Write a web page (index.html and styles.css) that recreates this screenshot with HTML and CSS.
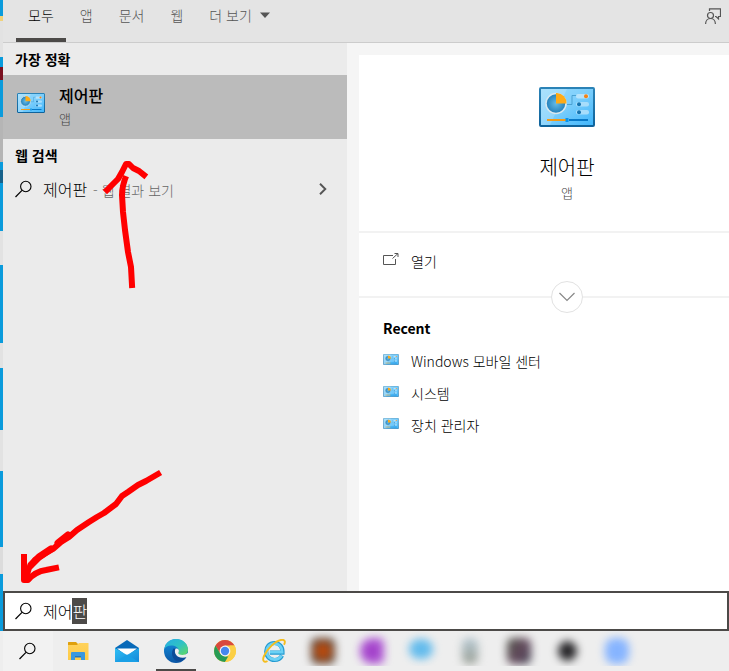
FILE: index.html
```html
<!DOCTYPE html>
<html lang="ko">
<head>
<meta charset="utf-8">
<title>제어판</title>
<link rel="stylesheet" href="styles.css">
</head>
<body>
<svg class="defs" aria-hidden="true">
  <defs>
    <linearGradient id="panel" x1="0" y1="0" x2="1" y2="1"><stop offset="0" stop-color="#9bdcfd"/><stop offset=".45" stop-color="#80d0fc"/><stop offset="1" stop-color="#3eb5fb"/></linearGradient>
    <linearGradient id="frame" x1="0" y1="0" x2="0" y2="1"><stop offset="0" stop-color="#2b83b7"/><stop offset="1" stop-color="#0f639b"/></linearGradient>
    <radialGradient id="pie"><stop offset="0" stop-color="#65bbe8"/><stop offset="1" stop-color="#217fba"/></radialGradient>
    <linearGradient id="edgeTop" x1="0" y1="0" x2="1" y2="1"><stop offset="0" stop-color="#26aee5"/><stop offset=".5" stop-color="#2fc2c4"/><stop offset="1" stop-color="#65db59"/></linearGradient>
    <linearGradient id="edgeBase" x1="0" y1="0" x2="0" y2="1"><stop offset="0" stop-color="#1491df"/><stop offset="1" stop-color="#0b56a5"/></linearGradient>
    <linearGradient id="mailFront" x1="0" y1="0" x2="1" y2="1"><stop offset="0" stop-color="#2ec0f5"/><stop offset="1" stop-color="#1687d8"/></linearGradient>
    <linearGradient id="folder" x1="0" y1="0" x2="0" y2="1"><stop offset="0" stop-color="#ffd25c"/><stop offset="1" stop-color="#fecb46"/></linearGradient>
  </defs>
  <symbol id="control-panel" viewBox="0 0 56 40">
    <rect x="1" y="1" width="54" height="38" rx="1" fill="url(#panel)" stroke="url(#frame)" stroke-width="2"/>
    <path d="M2 2h26L11 38H2z" fill="#fff" opacity=".18"/>
    <circle cx="17" cy="16.500" r="10" fill="url(#pie)" stroke="#d8e8f0" stroke-width="1.500"/>
    <path d="M17 6h1a10 10 0 0 1 9.500 10.500H17z" fill="#ffab16"/>
    <path d="M28 17.500h5v-9h5" fill="none" stroke="#4aa1d2"/>
    <rect x="37" y="7" width="13" height="4.500" rx="2" fill="#b7e3fb"/><circle cx="47" cy="9.200" r="2" fill="#f58316"/>
    <rect x="37" y="15" width="13" height="4.500" rx="2" fill="#a7ddfb"/><circle cx="40" cy="17.200" r="2" fill="#1674b1"/>
    <rect x="37" y="23" width="13" height="4.500" rx="2" fill="#a7ddfb"/><circle cx="40" cy="25.200" r="2" fill="#1674b1"/>
    <path d="M8 33h19" stroke="#f39b16" stroke-width="2"/><path d="M30 33h19" stroke="#0879c8" stroke-width="2"/>
    <path d="M26.500 31h3v4h-3z" fill="#0795ed"/>
  </symbol>
  <symbol id="search" viewBox="0 0 18 18">
    <circle cx="10.800" cy="6.500" r="5.200" fill="none" stroke="currentColor" stroke-width="1.100"/>
    <path d="M7 10.400.5 17" stroke="currentColor" stroke-width="1.200"/>
  </symbol>
</svg>

<div class="screen">
  <div class="upper">
    <div class="desktop-edge"></div>
    <div class="search-window">
      <header class="tabs-bar">
        <nav class="tabs">
          <button class="tab active">모두</button>
          <button class="tab">앱</button>
          <button class="tab">문서</button>
          <button class="tab">웹</button>
          <button class="tab more">더 보기 <svg class="caret" viewBox="0 0 10 6"><path d="M0 .5h10L5 6z" fill="currentColor"/></svg></button>
        </nav>
        <button class="feedback" aria-label="피드백">
          <svg width="16" height="17" viewBox="0 0 16 17" fill="none" stroke="#555" stroke-width="1.200"><path d="M4.500 3V.8h11v7.700h-2v2.400L11 8.500h-1"/><circle cx="5.500" cy="7.500" r="3"/><path d="M.6 16c0-3 1.800-5.500 4.900-5.500s4.900 2.500 4.900 5.500"/></svg>
        </button>
      </header>
      <div class="content">
        <section class="results">
          <h2 class="group">가장 정확</h2>
          <button class="best">
            <svg class="best-icon"><use href="#control-panel"/></svg>
            <span class="best-text"><strong>제어판</strong><small>앱</small></span>
          </button>
          <h2 class="group">웹 검색</h2>
          <button class="web-result">
            <svg class="search-icon"><use href="#search"/></svg>
            <span class="web-text">제어판<small> - 웹 결과 보기</small></span>
            <svg class="chevron" viewBox="0 0 8 12"><path d="m1 .8 5.300 5.200L1 11.200" fill="none" stroke="#555" stroke-width="1.900"/></svg>
          </button>
        </section>
        <section class="preview">
          <div class="card">
            <div class="hero">
              <svg class="hero-icon"><use href="#control-panel"/></svg>
              <h1>제어판</h1>
              <p>앱</p>
            </div>
            <div class="actions">
              <button class="row">
                <svg class="open-icon" viewBox="0 0 16 12" fill="none" stroke="#555"><path d="M10 2.500H.5v9h12V6"/><path d="M9.500 5.500 15 .5M11.500.5H15V4"/></svg>
                <span>열기</span>
              </button>
              <button class="expand" aria-label="확장"><svg width="16" height="10" viewBox="0 0 16 10"><path d="m.5 1 7.500 7.500L15.500 1" fill="none" stroke="#888" stroke-width="1.200"/></svg></button>
            </div>
            <div class="recent">
              <h3>Recent</h3>
              <button class="row"><svg class="mini"><use href="#control-panel"/></svg><span>Windows 모바일 센터</span></button>
              <button class="row"><svg class="mini"><use href="#control-panel"/></svg><span>시스템</span></button>
              <button class="row"><svg class="mini"><use href="#control-panel"/></svg><span>장치 관리자</span></button>
            </div>
          </div>
        </section>
      </div>
      <label class="search-box">
        <svg class="search-icon"><use href="#search"/></svg>
        <input id="query" type="text" value="제어판" aria-label="검색" autocomplete="off" spellcheck="false">
      </label>
    </div>
  </div>
  <footer class="taskbar">
    <button class="task task-search" aria-label="검색"><svg class="search-icon"><use href="#search"/></svg></button>
    <button class="task" aria-label="파일 탐색기">
      <svg width="22" height="20" viewBox="0 0 22 20"><path d="M1 1.500Q1 1 1.500 1H9l2 2h9v8H1z" fill="#dfa00d"/><path d="M1 4h9l2-2h9.500v17H1z" fill="url(#folder)"/><path d="M4 19v-7q0-1 1-1h12q1 0 1 1v7h-4v-4H8v4z" fill="#3998de"/><path d="M8 15h6v1.500H8z" fill="#2474b8"/></svg>
    </button>
    <button class="task" aria-label="메일">
      <svg width="24" height="24" viewBox="0 0 24 24"><path d="M0 9 12 1l12 8v5H0z" fill="#0869b8"/><path d="M2 9.500h20L12 17z" fill="#fff"/><path d="M0 9v14h24V9l-12 7z" fill="url(#mailFront)"/><path d="m0 23 12-7.500L24 23z" fill="#1aa0e6"/></svg>
    </button>
    <button class="task running" aria-label="Edge">
      <svg width="24" height="24" viewBox="0 0 24 24"><circle cx="12" cy="12" r="12" fill="url(#edgeBase)"/><path d="M.2 10.500C1.200 4 6 0 12 0c7 0 12 5 12 10.500 0 4-3 6-6.500 6-2.500 0-4-.8-4-1.700s1.200-1 1.200-3.200C14.700 8.500 11 6.500 7.300 6.500 4 6.500 1.200 8 .2 10.500z" fill="url(#edgeTop)"/><path d="M9.500 9.500c-3 4-1.500 11.500 4.500 13 3.500.4 7-2 8.500-5-2 .8-4.500 1-6.500.7-3-.5-5-2.700-5-5.200 0-1.500.5-2.500 1.200-3.200z" fill="#0c4b98"/><path d="M11.500 9.800c2.200-.9 4 1 3.300 3-.9 1.500-.6 2.200.8 2.700 2.900.9 5.900.3 8.400-1.500v3l-1 1c-3 1-6.500.9-8.800-.3-3.100-1.700-4-5.400-2.700-7.900z" fill="#eee"/></svg>
    </button>
    <button class="task" aria-label="Chrome">
      <svg width="22" height="22" viewBox="0 0 22 22"><circle cx="11" cy="11" r="11" fill="#fbcf45"/><path d="M1.500 5.500A11 11 0 0 1 20.500 5.500H11L6.300 13.800z" fill="#d8493e"/><path d="M1.500 5.500 6.300 13.700 11 16.500h4.700L11 22A11 11 0 0 1 1.500 5.500z" fill="#279b55"/><path d="M20.500 5.500A11 11 0 0 1 11 22l4.800-8.300V5.500z" fill="#fbcf45"/><circle cx="11" cy="11" r="5.400" fill="#f5f5f5"/><circle cx="11" cy="11" r="4.200" fill="#4587ed"/></svg>
    </button>
    <button class="task" aria-label="Internet Explorer">
      <svg width="24" height="24" viewBox="0 0 24 24" fill="none"><path d="M20 16.500c-1.500 3-4.300 4.500-7.500 4.500-5 0-8.300-3.700-8.300-8.500S7.500 4 12.500 4s8.300 3.800 8 9.700H7.800" stroke="#249bd1" stroke-width="4.200"/><path d="M19.500 16.500c-1.500 2.700-4 4-7 4-4.500 0-7.800-3.300-7.800-8s3.300-8 7.800-8 7.800 3.500 7.600 8.700H8" stroke="#6bd1f5" stroke-width="2.800"/><path d="M9 11q.8-3 3.800-3t3.700 3z" fill="#eee"/><path d="M5.500 22C2 24 0 21.500 2 17 5 10 14 1 20 .8c3-.1 3.600 2 2 5" stroke="#f4bd1d" stroke-width="1.900"/></svg>
    </button>
    <button class="task blurred" aria-label="앱 1"><i class="blob brown"></i></button>
    <button class="task blurred" aria-label="앱 2"><i class="blob purple"></i></button>
    <button class="task blurred" aria-label="앱 3"><i class="blob sky"></i></button>
    <button class="task blurred" aria-label="앱 4"><i class="blob stone"></i></button>
    <button class="task blurred" aria-label="앱 5"><i class="blob slate"></i></button>
    <button class="task blurred" aria-label="앱 6"><i class="blob black"></i></button>
    <button class="task blurred" aria-label="앱 7"><i class="blob blue"></i></button>
  </footer>
  <svg class="marks" width="180" height="600" viewBox="0 0 180 600" aria-hidden="true">
    <path d="M125 179c-2 5-3 10-3 16l1 17 2 18 3 22 3 15 1 18"/>
    <path d="m107 190 6-6 5-5 4-7 4-8h3l4 4 6 3 5 4"/>
    <path d="m158 474-12 7-8 4-10 7-6 4-6 8-12 9-7 4-8 5-12 8-8 7-8 5-8 7-9 5-9 6-6 8-3 10"/>
    <path d="m68 535-10 8M51 549l-12 8-8 8" class="heavy"/>
    <path d="M24 557v23h4c6-7 11-9 18-10l10-2"/>
  </svg>
</div>
<script src="script.js"></script>
</body>
</html>
```
FILE: styles.css
```css
* { box-sizing: border-box; }
body {
  margin: 0;
  overflow: hidden;
  font-family: "Noto Sans CJK KR", "Noto Sans", sans-serif;
  font-size: 14px;
  font-weight: 300;
  line-height: 20px;
  color: #000;
}
button {
  border: 0;
  padding: 0;
  background: none;
  font: inherit;
  color: inherit;
  text-align: left;
}
h1, h2, h3, p { margin: 0; }
svg { display: block; flex: none; }
.defs { position: absolute; width: 0; height: 0; }
.screen { position: relative; display: flex; flex-direction: column; min-height: 100vh; }
.upper { flex: 1; display: flex; }
.desktop-edge {
  flex: none;
  width: 3px;
  background: linear-gradient(#0a9bdc 16px, #f0d27a 16px 21px, #e2e2e2 21px 57px, #0a9bdc 57px 67px, #7a1020 67px 80px, #0a9bdc 80px 117px, #b5b5b5 117px 162px, #0a9bdc 162px 170px, #17618a 170px 183px, #0a9bdc 183px 231px, #e2e2e2 231px 265px, #0a9bdc 265px 343px, #e2e2e2 343px 368px, #0a9bdc 368px 430px, #e2e2e2 430px 471px, #0a9bdc 471px 547px, #dcdcdc 547px 574px, #0a9bdc 574px);
}
.search-window { flex: 1; min-width: 0; display: flex; flex-direction: column; }
.tabs-bar {
  display: flex;
  justify-content: space-between;
  align-items: flex-start;
  height: 43px;
  padding: 0 8px 0 13px;
  background: #e4e4e4;
  border-bottom: 1px solid #ccc;
}
.tabs { display: flex; gap: 2px; height: 42px; }
.tab { padding: 0 12px 8px; color: #555; border-bottom: 4px solid transparent; }
.tab.active { color: #000; border-color: #4c4a48; }
.more { display: flex; align-items: center; gap: 8px; }
.caret { width: 10px; height: 6px; color: #555; }
.feedback { padding-top: 8px; }
.content { flex: 1; display: flex; min-height: 0; }
.results { flex: none; width: 344px; background: #ebebeb; }
.group { padding: 6px 12px; font-size: 14px; font-weight: 700; line-height: 20px; }
.best {
  display: flex;
  align-items: center;
  gap: 14px;
  width: 100%;
  height: 64px;
  padding: 0 14px;
  background: #bbb;
}
.best-icon { width: 28px; height: 20px; margin-bottom: 8px; }
.best-text { display: flex; flex-direction: column; gap: 4px; }
.best-text strong { font-size: 16px; font-weight: 500; }
small { font-size: 13px; color: #444; }
.web-result { display: flex; align-items: center; width: 100%; height: 36px; padding: 0 20px 0 12px; }
.search-icon { width: 18px; height: 18px; }
.web-text { flex: 1; padding-left: 10px; font-size: 16px; }
.web-text small { padding-left: 2px; color: #666; font-size: 14px; }
.chevron { width: 8px; height: 12px; }
.preview { flex: 1; min-width: 0; display: flex; overflow: hidden; padding: 12px 0 0 12px; background: #f5f5f5; }
.card { flex: 1 0 416px; background: #fff; }
.hero { display: flex; flex-direction: column; align-items: center; height: 178px; padding-top: 32px; border-bottom: 2px solid #f2f2f2; }
.hero-icon { width: 56px; height: 40px; }
.hero h1 { margin-top: 26px; font-size: 20px; line-height: 28px; font-weight: 300; }
.hero p { margin-top: 2px; font-size: 13px; color: #444; }
.actions { position: relative; height: 65px; padding: 12px 24px; border-bottom: 2px solid #f2f2f2; }
.row { display: flex; align-items: center; gap: 12px; width: 100%; height: 32px; }
.open-icon { width: 16px; height: 12px; margin-bottom: 4px; }
.expand {
  position: absolute;
  left: 50%;
  bottom: -17px;
  display: grid;
  place-items: center;
  width: 32px;
  height: 32px;
  margin-left: -16px;
  border: 1px solid #e2e2e2;
  border-radius: 50%;
  background: #fff;
}
.recent { padding: 20px 24px; }
.recent h3 { font-size: 14px; line-height: 20px; margin-bottom: 7px; }
.mini { width: 16px; height: 11px; margin-bottom: 4px; }
.search-box { display: flex; align-items: center; height: 40px; padding: 0 10px; border: 2px solid #4c4a48; background: #fff; }
#query { flex: 1; min-width: 0; height: 26px; margin: 0 0 0 10px; padding: 0; border: 0; outline: 0; background: none; font: 300 16px/26px "Noto Sans CJK KR", sans-serif; color: #000; }
#query::selection { background: #4c4a48; color: #fff; }
.taskbar { display: flex; height: 40px; padding-left: 3px; background: #eee; }
.task { display: flex; justify-content: center; align-items: center; width: 49px; height: 40px; }
.task-search { width: 50px; background: #f2f2f2; }
.running { background: linear-gradient(#4c4a48, #4c4a48) center bottom / 40px 2px no-repeat; }
.blurred { height: 35px; padding-top: 5px; overflow: hidden; }
.blob { width: 24px; height: 26px; border-radius: 6px; filter: blur(4px); }
.brown { background: radial-gradient(#cc4d08 20%, #4a4038 75%); }
.purple { background: radial-gradient(#9c35c4, #b96bdc); border-radius: 12px 5px 5px 12px; }
.sky { height: 20px; margin-bottom: 4px; background: #63bbec; border-radius: 10px; }
.stone { width: 16px; background: linear-gradient(#b5c8d3, #9a9f94); }
.slate { background: linear-gradient(120deg, #4c5545, #65495e 55%, #39404d); }
.black { width: 19px; height: 20px; border-radius: 50%; background: #252427; }
.blue { background: #86b4ff; border-radius: 9px; }
.marks { position: absolute; left: 0; top: 0; pointer-events: none; fill: none; stroke: #f00; stroke-width: 6; stroke-linecap: square; stroke-linejoin: round; }
.heavy { stroke-width: 7; stroke-linecap: round; }
```
FILE: script.js
```js
// Keeps the auto-completed part of the query selected.
const query = document.getElementById("query");
query.focus();
query.setSelectionRange(2, 3);
```
